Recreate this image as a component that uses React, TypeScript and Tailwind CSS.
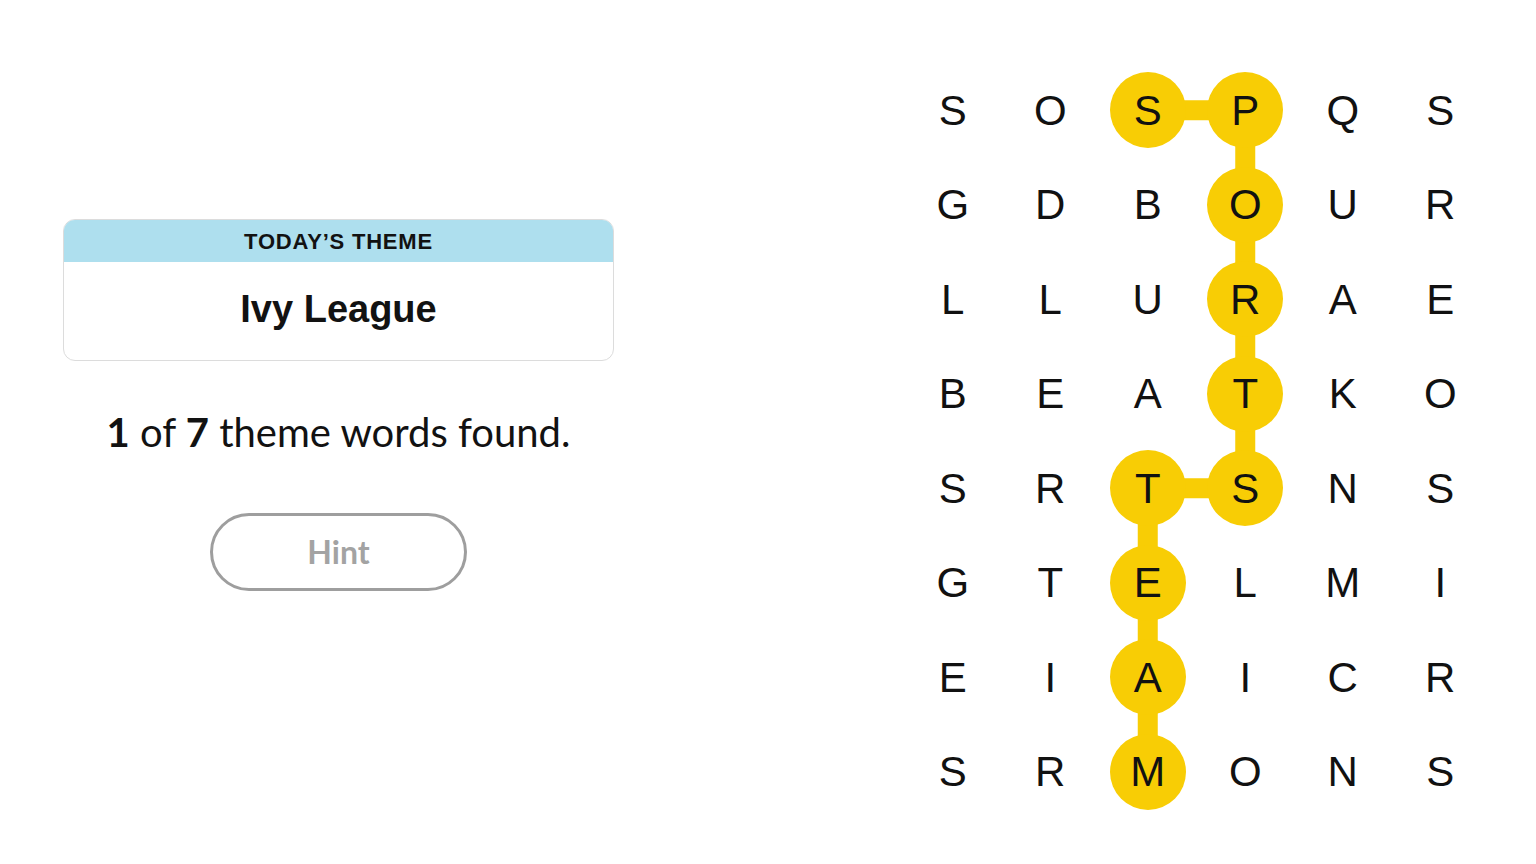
const LETTERS = [
  "SOSPQS",
  "GDBOUR",
  "LLURAE",
  "BEATKO",
  "SRTSNS",
  "GTELMI",
  "EIAICR",
  "SRMONS",
];

// found word path (row, col)
const PATH: [number, number][] = [
  [0, 2], [0, 3], [1, 3], [2, 3], [3, 3], [4, 3], [4, 2], [5, 2], [6, 2], [7, 2],
];

const COL_W = 97.5;
const ROW_H = 94.5;

function isFound(r: number, c: number) {
  return PATH.some(([pr, pc]) => pr === r && pc === c);
}

function Board() {
  const cx = (c: number) => c * COL_W + COL_W / 2;
  const cy = (r: number) => r * ROW_H + ROW_H / 2;
  const points = PATH.map(([r, c]) => `${cx(c)},${cy(r)}`).join(" ");

  return (
    <div className="relative w-[585px] h-[756px]">
      <svg className="absolute inset-0" width={585} height={756}>
        <polyline points={points} fill="none" stroke="#f8cd05" strokeWidth={20} strokeLinejoin="miter" />
      </svg>
      <div className="relative grid grid-cols-6 grid-rows-8 w-full h-full">
        {LETTERS.map((row, r) =>
          row.split("").map((ch, c) => (
            <div key={`${r}-${c}`} className="flex items-center justify-center">
              <div
                className={`w-[76px] h-[76px] rounded-full flex items-center justify-center text-[42px] text-[#111] font-['Liberation_Sans',sans-serif] ${
                  isFound(r, c) ? "bg-[#f8cd05]" : ""
                }`}
              >
                {ch}
              </div>
            </div>
          ))
        )}
      </div>
    </div>
  );
}

export default function App() {
  return (
    <div className="w-[1536px] h-[864px] bg-white flex font-['Liberation_Sans',sans-serif]">
      <div className="w-[551px] ml-[63px] pt-[219px] flex flex-col items-center">
        <div className="w-full rounded-[12px] border border-[#dcdcdc] overflow-hidden">
          <div className="h-[42px] bg-[#aedfee] flex items-center justify-center text-[22px] font-semibold tracking-[0.8px] text-[#121212]">
            TODAY’S THEME
          </div>
          <div className="h-[98px] flex items-center justify-center text-[38px] font-bold text-[#121212] pb-[4px]">
            Ivy League
          </div>
        </div>
        <div className="mt-[51px] text-[40px] text-[#121212] font-['Lato',sans-serif] leading-none">
          <span className="font-bold">1</span> of <span className="font-bold">7</span> theme words found.
        </div>
        <button className="mt-[61px] w-[257px] h-[78px] rounded-full border-[3px] border-[#9e9e9e] text-[#a3a3a3] text-[32px] font-bold font-['Lato',sans-serif] bg-white">
          Hint
        </button>
      </div>
      <div className="ml-[290px] pt-[63px]">
        <Board />
      </div>
    </div>
  );
}
